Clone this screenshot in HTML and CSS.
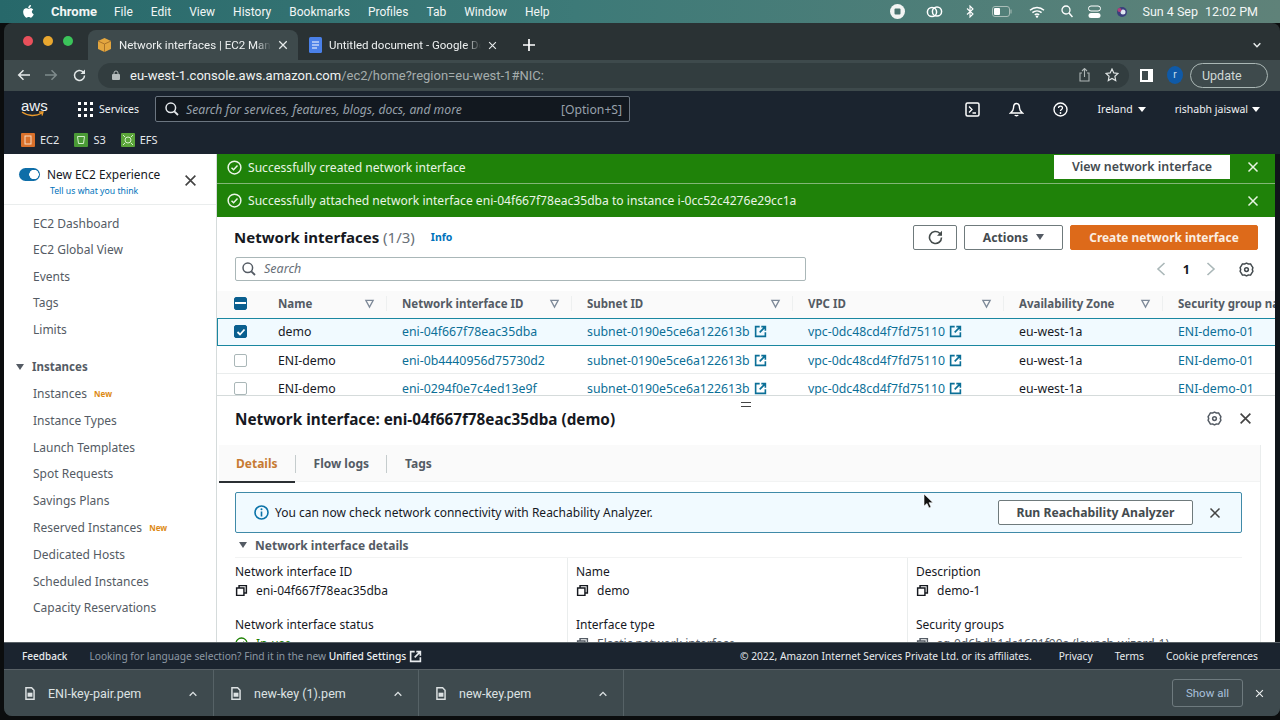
FILE: index.html
```html
<!DOCTYPE html>
<html lang="en">
<head>
    <meta charset="UTF-8">
    <meta name="viewport" content="width=device-width, initial-scale=1.0">
    <title>Network interfaces | EC2 Management Console</title>
    <link rel="stylesheet" href="styles.css">
</head>
<body>
    <svg class="defs" width="0" height="0">
        <symbol id="i-x" viewBox="0 0 16 16"><path d="M2 2l12 12M14 2L2 14" fill="none" stroke="currentColor" stroke-width="2"/></symbol>
        <symbol id="i-ext" viewBox="0 0 16 16"><path d="M7 2H2v12h12V9M9 2h5v5M14 2L7 9" fill="none" stroke="currentColor" stroke-width="2"/></symbol>
        <symbol id="i-copy" viewBox="0 0 16 16"><path d="M5 5V2h9v9h-3M2 5h9v9H2z" fill="none" stroke="currentColor" stroke-width="1.8"/></symbol>
        <symbol id="i-gear" viewBox="0 0 16 16"><circle cx="8" cy="8" r="2" fill="none" stroke="currentColor" stroke-width="1.6"/><path d="M8 1.2l2 .9 2.3-.1 1.3 2.2 1.2 1.9-.6 1.9.6 1.9-1.2 1.9-1.3 2.2-2.3-.1-2 .9-2-.9-2.3.1-1.3-2.2L1.2 9.9 1.8 8l-.6-1.9 1.2-1.9 1.3-2.2 2.3.1z" fill="none" stroke="currentColor" stroke-width="1.6" stroke-linejoin="round"/></symbol>
        <symbol id="i-sort" viewBox="0 0 12 12"><path d="M2 2.5h8L6 10z" fill="none" stroke="currentColor" stroke-width="1.4"/></symbol>
        <symbol id="i-ok" viewBox="0 0 16 16"><circle cx="8" cy="8" r="6.8" fill="none" stroke="currentColor" stroke-width="1.6"/><path d="M4.8 8.2l2.2 2.2 4.2-4.6" fill="none" stroke="currentColor" stroke-width="1.6"/></symbol>
        <symbol id="i-file" viewBox="0 0 12 16"><path d="M1 1h7l3 3v11H1z" fill="none" stroke="currentColor" stroke-width="1.8"/><rect x="3" y="7" width="6" height="5" fill="currentColor"/></symbol>
        <symbol id="i-up" viewBox="0 0 12 12"><path d="M2 8l4-4 4 4" fill="none" stroke="currentColor" stroke-width="1.6"/></symbol>
    </svg>

    <div class="menubar">
        <div class="menubar-left">
            <svg class="apple" viewBox="0 0 14 16" width="13" height="15"><path d="M10.6 8.4c0-1.7 1.4-2.5 1.5-2.6-.8-1.2-2.1-1.4-2.5-1.4-1.1-.1-2.1.6-2.6.6s-1.4-.6-2.3-.6C3.5 4.4 2.4 5 1.8 6c-1.2 2.1-.3 5.2.9 6.9.6.8 1.3 1.8 2.2 1.7.9 0 1.2-.6 2.3-.6s1.4.6 2.3.6c1 0 1.6-.8 2.1-1.7.7-1 1-1.9 1-2-.1 0-2-.8-2-2.5zM8.9 3.3c.5-.6.8-1.4.7-2.3-.7 0-1.6.5-2.1 1.1-.5.5-.9 1.4-.8 2.2.8.1 1.7-.4 2.2-1z" fill="#fff"/></svg>
            <b>Chrome</b><span>File</span><span>Edit</span><span>View</span><span>History</span><span>Bookmarks</span><span>Profiles</span><span>Tab</span><span>Window</span><span>Help</span>
        </div>
        <div class="menubar-right">
            <svg width="15" height="15" viewBox="0 0 15 15"><circle cx="7.5" cy="7.5" r="7.5" fill="#f2f4f3"/><rect x="4.5" y="4.5" width="6" height="6" rx="1" fill="#4a7470"/></svg>
            <svg class="m-cc" width="17" height="13" viewBox="0 0 17 13"><circle cx="6" cy="7" r="4.6" fill="none" stroke="#fff" stroke-width="1.5"/><circle cx="11" cy="6.5" r="4.6" fill="none" stroke="#fff" stroke-width="1.5"/></svg>
            <svg class="m-bt" width="8" height="13" viewBox="0 0 8 13"><path d="M1 3.5l6 5.5-3 3V1l3 3-6 5.5" fill="none" stroke="#fff" stroke-width="1.1"/></svg>
            <svg class="m-bat" width="20" height="11" viewBox="0 0 20 11"><rect x=".5" y=".5" width="17" height="10" rx="2.5" fill="none" stroke="#a9bdb8"/><rect x="2" y="2" width="6" height="7" rx="1" fill="#fff"/><rect x="18.5" y="3.5" width="1" height="4" fill="#a9bdb8"/></svg>
            <svg class="m-wifi" width="16" height="12" viewBox="0 0 16 12"><path d="M1 4.2C5 .6 11 .6 15 4.2M3.4 6.6c2.7-2.3 6.5-2.3 9.2 0M5.8 8.8c1.3-1 3.1-1 4.4 0" fill="none" stroke="#fff" stroke-width="1.5"/><circle cx="8" cy="10.6" r="1.2" fill="#fff"/></svg>
            <svg class="m-q" width="12" height="13" viewBox="0 0 12 13"><circle cx="5" cy="5" r="4" fill="none" stroke="#fff" stroke-width="1.3"/><path d="M8 8l3.5 4" stroke="#fff" stroke-width="1.5"/></svg>
            <svg class="m-cc2" width="13" height="14" viewBox="0 0 13 14"><rect x=".5" y="1" width="12" height="5" rx="2.5" fill="none" stroke="#fff"/><rect x=".5" y="8" width="12" height="5" rx="2.5" fill="#fff"/></svg>
            <svg class="m-siri" width="12" height="12" viewBox="0 0 12 12"><circle cx="6" cy="6" r="5" fill="#3a3f7c"/><circle cx="7" cy="6" r="2.5" fill="#dfe6f2"/><circle cx="3.5" cy="4" r="2" fill="#b0407a"/></svg>
            <span class="m-date">Sun 4 Sep</span><span class="m-time">12:02 PM</span>
        </div>
    </div>

    <div class="window">
        <div class="tabstrip">
            <div class="lights"><i class="red"></i><i class="yellow"></i><i class="green"></i></div>
            <div class="tab tab-active">
                <svg width="15" height="16" viewBox="0 0 15 16"><path d="M7.5 1L14 4v8l-6.5 3L1 12V4z" fill="#e3a63f"/><path d="M1 4l6.5 3L14 4M7.5 7v8" fill="none" stroke="#a8732a"/></svg>
                <span class="tab-title">Network interfaces | EC2 Mana</span>
                <svg class="tab-x" width="10" height="10"><use href="#i-x"/></svg>
            </div>
            <div class="tab">
                <svg width="13" height="16" viewBox="0 0 13 16"><rect width="13" height="16" rx="1.5" fill="#4a80e8"/><path d="M3 5h7M3 8h7M3 11h5" stroke="#fff" stroke-width="1.2"/></svg>
                <span class="tab-title">Untitled document - Google Do</span>
                <svg class="tab-x" width="9" height="9"><use href="#i-x"/></svg>
            </div>
            <svg class="tab-new" width="12" height="12" viewBox="0 0 12 12"><path d="M6 0v12M0 6h12" stroke="#fff" stroke-width="1.7"/></svg>
            <svg class="tab-more" width="10" height="10" viewBox="0 0 12 12"><path d="M2 4l4 4 4-4" fill="none" stroke="#e8ecec" stroke-width="1.8"/></svg>
        </div>

        <div class="toolbar">
            <svg class="tb-btn" width="14" height="12" viewBox="0 0 14 12"><path d="M13 6H2M6.5 1.2L1.7 6l4.8 4.8" fill="none" stroke="#e3e8e8" stroke-width="1.5"/></svg>
            <svg class="tb-btn dim" width="14" height="12" viewBox="0 0 14 12"><path d="M1 6h11M7.5 1.2L12.3 6l-4.8 4.8" fill="none" stroke="#7e8a8b" stroke-width="1.5"/></svg>
            <svg class="tb-btn" width="13" height="13" viewBox="0 0 13 13"><path d="M11.5 6.5a5 5 0 1 1-1.5-3.600L11.5 4.5" fill="none" stroke="#e3e8e8" stroke-width="1.5"/><path d="M12 .5v4.5H7.5z" fill="#e3e8e8"/></svg>
            <div class="omnibox">
                <svg width="8" height="10" viewBox="0 0 8 10"><rect y="4" width="8" height="6" rx="1" fill="#b5bcbc"/><path d="M2 4.5V3a2 2 0 0 1 4 0v1.500" fill="none" stroke="#b5bcbc"/></svg>
                <span class="url"><b>eu-west-1.console.aws.amazon.com</b>/ec2/home?region=eu-west-1#NIC:</span>
                <svg class="omni-share" width="11" height="14" viewBox="0 0 11 14"><path d="M3 5H1v8h9V5H8M5.5 9V1M3 3l2.5-2.5L8 3" fill="none" stroke="#aeb6b6" stroke-width="1.1"/></svg>
                <svg class="omni-star" width="14" height="14" viewBox="0 0 14 14"><path d="M7 1l1.800 3.900 4.200.5-3.100 2.900.8 4.200L7 10.400l-3.700 2.100.8-4.200L1 5.400l4.200-.5z" fill="none" stroke="#dfe4e4" stroke-width="1.2"/></svg>
            </div>
            <svg class="tb-side" width="13" height="13" viewBox="0 0 13 13"><rect x="1" y="1" width="11" height="11" fill="none" stroke="#fff" stroke-width="2"/><rect x="8" y="1" width="4" height="11" fill="#fff"/></svg>
            <div class="avatar">r</div>
            <div class="update">Update</div>
        </div>

        <div class="awsnav">
            <div class="aws-logo">aws
                <svg width="23" height="7" viewBox="0 0 23 7"><path d="M1 1c6 4.500 14 4.500 20 1M18 1h4l-1 3.500" fill="none" stroke="#ec9a2c" stroke-width="1.3"/></svg>
            </div>
            <div class="services">
                <div class="dots"><i></i><i></i><i></i><i></i><i></i><i></i><i></i><i></i><i></i></div>
                <span>Services</span>
            </div>
            <div class="awssearch">
                <svg width="14" height="14" viewBox="0 0 14 14"><circle cx="5.8" cy="5.8" r="4.8" fill="none" stroke="#e6e9ec" stroke-width="1.5"/><path d="M9.3 9.3L13 13" stroke="#e6e9ec" stroke-width="1.8"/></svg>
                <em>Search for services, features, blogs, docs, and more</em>
                <span>[Option+S]</span>
            </div>
            <div class="nav-right">
                <svg class="nav-icon" width="15" height="15" viewBox="0 0 15 15"><rect x="1" y="1" width="13" height="13" rx="1.5" fill="none" stroke="#fff" stroke-width="1.5"/><path d="M4 4.5L7 7.5 4 10.5M7.500 11H11" fill="none" stroke="#fff" stroke-width="1.3"/></svg>
                <svg class="nav-icon" width="15" height="15" viewBox="0 0 15 15"><path d="M7.5 1.5C5 1.5 4.5 3.5 4.5 6c0 2-1 3.5-3 5h12c-2-1.5-3-3-3-5 0-2.5-.5-4.5-3-4.500zM5.800 13c.6 1 2.800 1 3.400 0" fill="none" stroke="#fff" stroke-width="1.4"/></svg>
                <svg class="nav-icon" width="15" height="15" viewBox="0 0 15 15"><circle cx="7.5" cy="7.5" r="6.5" fill="none" stroke="#fff" stroke-width="1.4"/><path d="M5.5 6c0-2.5 4-2.5 4 0 0 1.5-2 1.5-2 3" fill="none" stroke="#fff" stroke-width="1.3"/><circle cx="7.5" cy="11" r=".9" fill="#fff"/></svg>
                <span class="nav-link nav-ireland">Ireland <i class="caret-w"></i></span>
                <span class="nav-link nav-user">rishabh jaiswal <i class="caret-w"></i></span>
            </div>
        </div>

        <div class="favbar">
            <span class="fav"><svg width="14" height="14" viewBox="0 0 14 14"><rect width="14" height="14" rx="1" fill="#d9702a"/><rect x="4" y="3" width="6" height="8" fill="none" stroke="#f7dcc4"/></svg>EC2</span>
            <span class="fav"><svg width="14" height="14" viewBox="0 0 14 14"><rect width="14" height="14" rx="1" fill="#4a9a36"/><path d="M3.5 3.5h7l-1 7h-5z" fill="none" stroke="#d5efcb"/></svg>S3</span>
            <span class="fav"><svg width="14" height="14" viewBox="0 0 14 14"><rect width="14" height="14" rx="1" fill="#5ba53a"/><circle cx="7" cy="7" r="3" fill="none" stroke="#d5efcb"/><path d="M2 2l2 2M12 2l-2 2M2 12l2-2M12 12l-2-2" stroke="#d5efcb"/></svg>EFS</span>
        </div>

        <div class="main">
            <aside class="sidebar">
                <div class="side-head">
                    <div class="side-head-top"><i class="toggle"></i><span>New EC2 Experience</span></div>
                    <a class="side-feedback">Tell us what you think</a>
                    <svg class="side-x" width="13" height="13"><use href="#i-x"/></svg>
                </div>
                <ul class="side-list">
                    <li>EC2 Dashboard</li>
                    <li>EC2 Global View</li>
                    <li>Events</li>
                    <li>Tags</li>
                    <li>Limits</li>
                </ul>
                <div class="side-group"><i class="caret"></i>Instances</div>
                <ul class="side-list side-list-2">
                    <li>Instances <span class="new">New</span></li>
                    <li>Instance Types</li>
                    <li>Launch Templates</li>
                    <li>Spot Requests</li>
                    <li>Savings Plans</li>
                    <li>Reserved Instances <span class="new">New</span></li>
                    <li>Dedicated Hosts</li>
                    <li>Scheduled Instances</li>
                    <li>Capacity Reservations</li>
                </ul>
                <div class="side-group side-group-2"><i class="caret"></i>Images</div>
            </aside>

            <section class="content">
                <div class="flash flash-1">
                    <svg width="15" height="15"><use href="#i-ok"/></svg>
                    <span>Successfully created network interface</span>
                    <div class="flash-btn">View network interface</div>
                    <svg class="flash-x" width="12" height="12"><use href="#i-x"/></svg>
                </div>
                <div class="flash flash-2">
                    <svg width="15" height="15"><use href="#i-ok"/></svg>
                    <span>Successfully attached network interface eni-04f667f78eac35dba to instance i-0cc52c4276e29cc1a</span>
                    <svg class="flash-x" width="12" height="12"><use href="#i-x"/></svg>
                </div>

                <div class="tbl-head">
                    <h1>Network interfaces <span>(1/3)</span></h1>
                    <a class="info">Info</a>
                    <div class="btn btn-icon"><svg width="15" height="15" viewBox="0 0 15 15"><path d="M13.5 7.5a6 6 0 1 1-1.800-4.300l1.800 1.800" fill="none" stroke="#444b4b" stroke-width="1.6"/><path d="M14 .8v5H9z" fill="#444b4b"/></svg></div>
                    <div class="btn btn-actions">Actions <i class="caret"></i></div>
                    <div class="btn btn-primary">Create network interface</div>
                </div>
                <div class="tbl-tools">
                    <div class="search-box">
                        <svg width="14" height="14" viewBox="0 0 14 14"><circle cx="5.8" cy="5.8" r="4.8" fill="none" stroke="#545b64" stroke-width="1.5"/><path d="M9.3 9.3L13 13" stroke="#545b64" stroke-width="1.8"/></svg>
                        <em>Search</em>
                    </div>
                    <div class="pager">
                        <svg width="10" height="14" viewBox="0 0 10 14"><path d="M8.5 1L2 7l6.5 6" fill="none" stroke="#aab7b8" stroke-width="1.6"/></svg>
                        <b>1</b>
                        <svg width="10" height="14" viewBox="0 0 10 14"><path d="M1.5 1L8 7l-6.5 6" fill="none" stroke="#aab7b8" stroke-width="1.6"/></svg>
                        <svg class="pager-gear" width="15" height="15"><use href="#i-gear"/></svg>
                    </div>
                </div>

                <div class="table">
                    <div class="row row-head">
                        <div class="cell-check"><i class="check check-mixed"></i></div>
                        <div class="th"><div>Name<svg width="11" height="11"><use href="#i-sort"/></svg></div></div>
                        <div class="th"><div>Network interface ID<svg width="11" height="11"><use href="#i-sort"/></svg></div></div>
                        <div class="th"><div>Subnet ID<svg width="11" height="11"><use href="#i-sort"/></svg></div></div>
                        <div class="th"><div>VPC ID<svg width="11" height="11"><use href="#i-sort"/></svg></div></div>
                        <div class="th"><div>Availability Zone<svg width="11" height="11"><use href="#i-sort"/></svg></div></div>
                        <div class="th th-last">Security group name</div>
                    </div>
                    <div class="row row-selected">
                        <div class="cell-check"><i class="check check-on"><svg width="10" height="10" viewBox="0 0 10 10"><path d="M1.5 5l2.5 2.5 4.5-5" fill="none" stroke="#fff" stroke-width="1.8"/></svg></i></div>
                        <div>demo</div>
                        <div class="link">eni-04f667f78eac35dba</div>
                        <div class="link">subnet-0190e5ce6a122613b <svg width="13" height="13"><use href="#i-ext"/></svg></div>
                        <div class="link">vpc-0dc48cd4f7fd75110 <svg width="13" height="13"><use href="#i-ext"/></svg></div>
                        <div>eu-west-1a</div>
                        <div class="link">ENI-demo-01</div>
                    </div>
                    <div class="row row-plain">
                        <div class="cell-check"><i class="check"></i></div>
                        <div>ENI-demo</div>
                        <div class="link">eni-0b4440956d75730d2</div>
                        <div class="link">subnet-0190e5ce6a122613b <svg width="13" height="13"><use href="#i-ext"/></svg></div>
                        <div class="link">vpc-0dc48cd4f7fd75110 <svg width="13" height="13"><use href="#i-ext"/></svg></div>
                        <div>eu-west-1a</div>
                        <div class="link">ENI-demo-01</div>
                    </div>
                    <div class="row row-cut">
                        <div class="cell-check"><i class="check"></i></div>
                        <div>ENI-demo</div>
                        <div class="link">eni-0294f0e7c4ed13e9f</div>
                        <div class="link">subnet-0190e5ce6a122613b <svg width="13" height="13"><use href="#i-ext"/></svg></div>
                        <div class="link">vpc-0dc48cd4f7fd75110 <svg width="13" height="13"><use href="#i-ext"/></svg></div>
                        <div>eu-west-1a</div>
                        <div class="link">ENI-demo-01</div>
                    </div>
                </div>

                <div class="panel">
                    <div class="handle"></div>
                    <div class="panel-head">
                        <h2>Network interface: eni-04f667f78eac35dba (demo)</h2>
                        <svg class="panel-gear" width="15" height="15"><use href="#i-gear"/></svg>
                        <svg class="panel-x" width="13" height="13"><use href="#i-x"/></svg>
                    </div>
                    <div class="panel-body">
                        <div class="tabs">
                            <span class="ptab ptab-on">Details</span>
                            <span class="ptab">Flow logs</span>
                            <span class="ptab">Tags</span>
                        </div>
                        <div class="alert">
                            <svg width="15" height="15" viewBox="0 0 15 15"><circle cx="7.5" cy="7.5" r="6.5" fill="none" stroke="#0b73a8" stroke-width="1.6"/><path d="M7.5 6.5v5" stroke="#0b73a8" stroke-width="1.6"/><circle cx="7.5" cy="4.3" r="1" fill="#0b73a8"/></svg>
                            <span>You can now check network connectivity with Reachability Analyzer.</span>
                            <div class="btn btn-run">Run Reachability Analyzer</div>
                            <svg class="alert-x" width="12" height="12"><use href="#i-x"/></svg>
                        </div>
                        <div class="details-title"><i class="caret"></i>Network interface details</div>
                        <div class="details">
                            <div class="dcol">
                                <label>Network interface ID</label>
                                <p><svg width="13" height="13"><use href="#i-copy"/></svg>eni-04f667f78eac35dba</p>
                                <label>Network interface status</label>
                                <p class="status"><svg width="13" height="13"><use href="#i-ok"/></svg>In-use</p>
                            </div>
                            <div class="dcol">
                                <label>Name</label>
                                <p><svg width="13" height="13"><use href="#i-copy"/></svg>demo</p>
                                <label>Interface type</label>
                                <p class="faded"><svg width="13" height="13"><use href="#i-copy"/></svg>Elastic network interface</p>
                            </div>
                            <div class="dcol">
                                <label>Description</label>
                                <p><svg width="13" height="13"><use href="#i-copy"/></svg>demo-1</p>
                                <label>Security groups</label>
                                <p class="faded"><svg width="13" height="13"><use href="#i-copy"/></svg>sg-0d6bdb1dc1681f90a (launch-wizard-1)</p>
                            </div>
                        </div>
                    </div>
                    <svg class="cursor" width="11" height="16" viewBox="0 0 11 16"><path d="M1 1v12l3-2.5 2 4.500 2-1-2-4.300h4z" fill="#111" stroke="#fff" stroke-width=".6"/></svg>
                </div>
            </section>
        </div>

        <footer class="footer">
            <span class="foot-fb">Feedback</span>
            <span class="foot-lang">Looking for language selection? Find it in the new <b>Unified Settings</b></span>
            <svg class="foot-ext" width="13" height="13"><use href="#i-ext"/></svg>
            <span class="foot-copy">© 2022, Amazon Internet Services Private Ltd. or its affiliates.</span>
            <span class="foot-link">Privacy</span>
            <span class="foot-link">Terms</span>
            <span class="foot-link">Cookie preferences</span>
        </footer>

        <div class="downloads">
            <div class="dl"><svg width="10" height="13"><use href="#i-file"/></svg><span>ENI-key-pair.pem</span><svg class="dl-up" width="10" height="10"><use href="#i-up"/></svg></div>
            <div class="dl"><svg width="10" height="13"><use href="#i-file"/></svg><span>new-key (1).pem</span><svg class="dl-up" width="10" height="10"><use href="#i-up"/></svg></div>
            <div class="dl"><svg width="10" height="13"><use href="#i-file"/></svg><span>new-key.pem</span><svg class="dl-up" width="10" height="10"><use href="#i-up"/></svg></div>
            <div class="showall">Show all</div>
            <svg class="dl-x" width="9" height="9"><use href="#i-x"/></svg>
        </div>
    </div>
</body>
</html>
```

FILE: styles.css
```css
* {
    box-sizing: border-box;
}

html, body {
    margin: 0;
    height: 720px;
    overflow: hidden;
}

body {
    font-family: 'Noto Sans', sans-serif;
    font-size: 12px;
    color: #16191f;
    background-color: #0b0d0e;
    display: flex;
    flex-direction: column;
}

.defs {
    position: absolute;
}

i {
    display: block;
}

svg {
    display: block;
    flex: none;
}

ul {
    list-style: none;
    margin: 0;
    padding: 0;
}

/* mac menu bar */
.menubar {
    height: 23px;
    flex: none;
    display: flex;
    align-items: center;
    justify-content: space-between;
    padding: 0 22px 0 22px;
    background: linear-gradient(90deg, #27686a, #3d7a78 45%, #5f8279);
    color: #f2f6f5;
    font-family: Roboto, sans-serif;
    font-size: 12px;
}

.menubar-left {
    display: flex;
    align-items: center;
}

.menubar-left b {
    margin-left: 16px;
    margin-right: 17px;
    font-size: 13px;
}

.menubar-left span {
    margin-right: 18px;
}

.menubar-right {
    display: flex;
    align-items: center;
}

.m-cc { margin-left: 21px; }
.m-bt { margin-left: 23px; }
.m-bat { margin-left: 18px; }
.m-wifi { margin-left: 17px; }
.m-q { margin-left: 16px; }
.m-cc2 { margin-left: 15px; }
.m-siri { margin-left: 15px; }
.m-date { margin-left: 14px; font-size: 12.5px; }
.m-time { margin-left: 7px; font-size: 12.5px; }

/* browser window */
.window {
    flex: 1;
    margin: 0 0 4px 4px;
    display: flex;
    flex-direction: column;
    min-height: 0;
    background-color: #2a3234;
    border-radius: 8px;
    overflow: hidden;
}

.tabstrip {
    height: 37px;
    flex: none;
    display: flex;
    align-items: flex-end;
    color: #eef1f1;
    font-family: Roboto, sans-serif;
    font-size: 11.5px;
}

.lights {
    display: flex;
    gap: 10px;
    width: 84px;
    padding: 0 0 14px 19px;
}

.lights i {
    width: 10px;
    height: 10px;
    border-radius: 50%;
}

.red { background-color: #e8505b; }
.yellow { background-color: #e9a72f; }
.green { background-color: #3bc45a; }

.tab {
    width: 205px;
    height: 30px;
    padding: 0 8px 0 9px;
    display: flex;
    align-items: center;
    gap: 7px;
    white-space: nowrap;
}

.tab-active {
    width: 210px;
    margin-right: 2px;
    padding-right: 10px;
    background-color: #3e4a4c;
    border-radius: 8px 8px 0 0;
}

.tab-title {
    flex: 1;
    overflow: hidden;
    -webkit-mask-image: linear-gradient(90deg, #000 90%, transparent);
    mask-image: linear-gradient(90deg, #000 90%, transparent);
}

.tab-x {
    color: #e8ecec;
}

.tab-new {
    margin: 0 0 9px 18px;
}

.tab-more {
    margin: 0 0 10px auto;
    position: relative;
    right: 18px;
}

.toolbar {
    height: 31px;
    flex: none;
    display: flex;
    align-items: center;
    padding: 0 11px 1px 13px;
    background-color: #3e4a4c;
}

.tb-btn {
    margin-right: 13px;
}

.tb-btn.dim {
    margin-right: 15px;
}

.omnibox {
    width: 1031px;
    height: 25px;
    margin-left: -1px;
    padding: 0 10px 0 14px;
    display: flex;
    align-items: center;
    border-radius: 13px;
    background-color: #323d3f;
    font-family: Roboto, sans-serif;
    font-size: 13px;
    color: #a5adad;
}

.url {
    margin-left: 10px;
    flex: 1;
}

.url b {
    font-weight: 400;
    color: #f0f3f3;
}

.omni-star {
    margin-left: 15px;
}

.tb-side {
    margin-left: 11px;
}

.avatar {
    width: 16px;
    height: 18px;
    margin-left: 14px;
    border-radius: 50%;
    background-color: #0f5aa8;
    color: #cfe0f0;
    font-family: Roboto, sans-serif;
    font-size: 10px;
    line-height: 18px;
    text-align: center;
}

.update {
    width: 78px;
    height: 25px;
    margin-left: 7px;
    border: 1px solid #aab7b5;
    border-radius: 13px;
    color: #cfd8d6;
    font-family: Roboto, sans-serif;
    font-size: 12.5px;
    line-height: 23px;
    padding-left: 11px;
}

/* aws console header */
.awsnav {
    height: 36px;
    flex: none;
    display: flex;
    align-items: center;
    padding: 0 20px 0 17px;
    background-color: #1b242f;
    color: #f0f2f4;
    font-size: 12px;
}

.aws-logo {
    width: 27px;
    font-family: 'Liberation Sans', sans-serif;
    font-size: 15px;
    line-height: 11px;
}

.services {
    display: flex;
    align-items: center;
    gap: 6px;
    margin-left: 30px;
    font-size: 10.5px;
}

.dots {
    width: 15px;
    display: grid;
    grid-template-columns: repeat(3, 3px);
    gap: 3px;
}

.dots i {
    height: 3px;
    background-color: #fff;
}

.awssearch {
    width: 475px;
    height: 26px;
    margin-left: 16px;
    padding: 0 7px 0 9px;
    display: flex;
    align-items: center;
    border: 1px solid #6b7580;
    border-radius: 2px;
    background-color: #12181f;
    color: #98a1ab;
    font-size: 12.2px;
}

.awssearch em {
    flex: 1;
    margin-left: 7px;
}

.nav-right {
    margin-left: auto;
    display: flex;
    align-items: center;
    font-size: 10.5px;
}

.nav-icon {
    margin-right: 29px;
}

.nav-link {
    display: flex;
    align-items: center;
    gap: 5px;
}

.nav-ireland {
    margin-left: 1px;
    margin-right: 29px;
}

.nav-user {
    gap: 4px;
}

.caret-w {
    border: 4px solid transparent;
    border-top: 5px solid #fff;
    border-bottom: 0;
}

.favbar {
    height: 27px;
    flex: none;
    display: flex;
    align-items: center;
    gap: 15px;
    padding: 0 0 2px 17px;
    background-color: #1b242f;
    color: #e6e9ec;
    font-size: 11px;
}

.fav {
    display: flex;
    align-items: center;
    gap: 5px;
}

/* page body */
.main {
    flex: none;
    height: 488px;
    display: flex;
    padding-right: 5px;
    background-color: #10151a;
}

.sidebar {
    width: 213px;
    flex: none;
    overflow: hidden;
    background-color: #fff;
    color: #545b64;
    border-right: 1px solid #d5dbdb;
}

.side-head {
    position: relative;
    height: 51px;
    padding: 13px 0 0 15px;
    border-bottom: 1px solid #eaeded;
}

.side-head-top {
    display: flex;
    align-items: center;
    gap: 7px;
    color: #16191f;
    font-size: 11.9px;
    line-height: 14px;
}

.toggle {
    width: 21px;
    height: 13px;
    border-radius: 7px;
    background: radial-gradient(circle at 15px 6.5px, #fff 4.5px, #0f6ea8 5px);
}

.side-feedback {
    display: block;
    margin: 4px 0 0 31px;
    font-size: 8.7px;
    color: #0073bb;
}

.side-x {
    position: absolute;
    top: 20px;
    left: 180px;
    color: #444;
}

.side-list {
    padding: 6px 0 0 29px;
}

.side-list li {
    height: 26.4px;
    line-height: 26.4px;
}

.side-list-2 {
    padding-top: 2px;
}

.side-list-2 li {
    height: 26.8px;
    line-height: 26.8px;
}

.side-group {
    display: flex;
    align-items: center;
    gap: 8px;
    height: 24px;
    margin-top: 12px;
    padding-left: 12px;
    font-weight: 700;
    font-size: 11.5px;
}

.caret {
    border: 4.5px solid transparent;
    border-top: 6px solid #545b64;
    border-bottom: 0;
}

.new {
    margin-left: 4px;
    font-size: 8px;
    font-weight: 700;
    color: #dd8a14;
    vertical-align: 1px;
}

.content {
    flex: 1;
    min-width: 0;
    display: flex;
    flex-direction: column;
    background-color: #fff;
}

.flash {
    flex: none;
    display: flex;
    align-items: center;
    gap: 6px;
    padding: 0 16px 0 10px;
    background-color: #1f8209;
    color: #eaf5e6;
    font-size: 12.1px;
}

.flash-1 {
    height: 29px;
    padding-bottom: 3px;
}

.flash-2 {
    height: 34px;
    border-top: 1px solid #82b676;
}

.flash-btn {
    width: 176px;
    height: 24px;
    margin-left: auto;
    margin-right: 11px;
    background-color: #fff;
    color: #444b4f;
    font-weight: 600;
    font-size: 12.4px;
    line-height: 23px;
    text-align: center;
}

.flash-x {
    color: #e7f4e2;
}

.flash-2 .flash-x {
    margin-left: auto;
}

.tbl-head {
    height: 40px;
    flex: none;
    display: flex;
    align-items: center;
    padding: 0 17px;
}

h1 {
    margin: 0;
    font-size: 15px;
    font-weight: 700;
}

h1 span {
    font-weight: 400;
    color: #687078;
}

.info {
    margin-left: 16px;
    font-size: 10.5px;
    font-weight: 700;
    color: #0073bb;
}

.btn {
    height: 25px;
    border: 1px solid #6f7a7c;
    border-radius: 2px;
    background-color: #fff;
    color: #444b4f;
    font-weight: 700;
    display: flex;
    align-items: center;
    justify-content: center;
}

.btn-icon {
    width: 44px;
    margin-left: auto;
}

.btn-actions {
    width: 99px;
    margin-left: 7px;
    gap: 8px;
    font-size: 12.2px;
}

.btn-primary {
    width: 188px;
    margin-left: 7px;
    background-color: #dd6a1a;
    border-color: #dd6a1a;
    color: #fbeee2;
    font-size: 11.9px;
}

.tbl-tools {
    height: 34px;
    flex: none;
    display: flex;
    align-items: flex-start;
    padding: 0 21px 0 18px;
}

.search-box {
    width: 571px;
    height: 24px;
    padding: 0 6px 1px;
    display: flex;
    align-items: center;
    gap: 8px;
    border: 1px solid #aab7b8;
    border-radius: 2px;
    color: #687078;
    font-size: 12.5px;
}

.pager {
    height: 24px;
    margin-left: auto;
    display: flex;
    align-items: center;
}

.pager b {
    font-size: 12.5px;
    margin: 0 16px 0 17px;
}

.pager-gear {
    margin-left: 23px;
    color: #444b4f;
}

.table {
    flex: none;
    height: 104px;
    overflow: hidden;
}

.row {
    height: 28px;
    display: grid;
    grid-template-columns: 61px 124px 185px 221px 211px 159px 100px;
    align-items: center;
    white-space: nowrap;
    border-bottom: 1px solid #eaeded;
    font-size: 12.3px;
}

.row-head {
    height: 27px;
    padding-bottom: 2px;
    background-color: #fafafa;
    color: #545b64;
    font-size: 11.5px;
    font-weight: 700;
    border-bottom: 0;
}

.row-selected {
    grid-template-columns: 60px 124px 185px 221px 211px 159px 100px;
    padding-bottom: 1px;
    background-color: #f1faff;
    border: 1px solid #1a87a0;
    border-right: 0;
}

.row-selected .cell-check {
    padding-left: 16px;
}

.row-plain {
    padding-top: 1px;
}

.row-cut {
    border-bottom: 0;
}

.cell-check {
    padding-left: 17px;
}

.check {
    width: 13px;
    height: 13px;
    border: 1px solid #aab7b8;
    border-radius: 2px;
    background-color: #fff;
}

.check-on {
    border-color: #0a5f8f;
    background-color: #0a5f8f;
    padding: 1px 0 0 1px;
}

.check-mixed {
    border-color: #0a5f8f;
    background: linear-gradient(#0a5f8f 4px, #fff 4px, #fff 6px, #0a5f8f 6px);
}

.th {
    padding-right: 15px;
}

.th div {
    display: flex;
    align-items: center;
    justify-content: space-between;
    padding-right: 11px;
    border-right: 1px solid #eef0f0;
}

.th svg {
    color: #7d8998;
}

.th-last {
    padding: 0;
}

.link {
    display: flex;
    align-items: center;
    gap: 4px;
    color: #0b6f97;
}

.panel {
    flex: 1;
    min-height: 0;
    position: relative;
    overflow: hidden;
    background-color: #fff;
    border-top: 1px solid #d5dbdb;
    padding: 0 14px 0 2px;
}

.handle {
    position: absolute;
    top: 6px;
    left: 524px;
    width: 10px;
    height: 5px;
    border-top: 1px solid #444;
    border-bottom: 1px solid #444;
}

.panel-head {
    height: 49px;
    display: flex;
    align-items: center;
    padding: 0 9px 4px 16px;
}

h2 {
    margin: 0;
    flex: 1;
    font-size: 15.3px;
    font-weight: 700;
}

.panel-gear {
    color: #545b64;
}

.panel-x {
    margin-left: 17px;
    color: #444;
}

.panel-body {
    border-right: 1px solid #eaeded;
    padding: 0 18px 0 16px;
}

.tabs {
    height: 37px;
    margin: 0 -18px 0 -16px;
    padding-top: 1px;
    display: flex;
    align-items: center;
    background-color: #fafafa;
    border-bottom: 1px solid #f2f3f3;
    color: #545b64;
    font-weight: 700;
}

.ptab {
    height: 18px;
    line-height: 18px;
    padding: 0 17px 0 18px;
    border-right: 1px solid #c5cccd;
    position: relative;
}

.ptab:first-child {
    padding: 0 17px;
}

.ptab:last-child {
    border-right: 0;
}

.ptab-on {
    color: #c77a33;
}

.ptab-on::after {
    content: '';
    position: absolute;
    left: 0;
    right: 0;
    bottom: -10px;
    height: 2px;
    background-color: #2b2f33;
}

.alert {
    height: 41px;
    margin-top: 10px;
    padding: 0 20px 0 18px;
    display: flex;
    align-items: center;
    gap: 6px;
    border: 1px solid #3f8aa8;
    border-radius: 2px;
    background-color: #f1faff;
}

.btn-run {
    width: 195px;
    margin-left: auto;
    font-size: 12.2px;
}

.alert-x {
    margin-left: 10px;
    color: #444;
}

.details-title {
    height: 25px;
    display: flex;
    align-items: center;
    gap: 8px;
    padding-left: 4px;
    color: #545b64;
    font-weight: 700;
    border-bottom: 1px solid #f2f3f3;
}

.details {
    display: grid;
    grid-template-columns: 333px 340px 1fr;
}

.dcol {
    padding: 4px 0 0 8px;
    border-right: 1px solid #eaeded;
    height: 90px;
}

.dcol:first-child {
    padding-left: 0;
}

.dcol:last-child {
    border-right: 0;
}

label {
    display: block;
    height: 19px;
    line-height: 19px;
}

.dcol p {
    margin: 0 0 15px;
    height: 19px;
    display: flex;
    align-items: center;
    gap: 8px;
}

.status {
    color: #1d8102;
}

.faded {
    color: #545b64;
}

.cursor {
    position: absolute;
    left: 706px;
    top: 97px;
}

/* console footer */
.footer {
    height: 27px;
    flex: none;
    display: flex;
    align-items: center;
    padding: 0 22px 0 18px;
    background-color: #1b242f;
    color: #e8ebee;
    font-size: 10.2px;
    border-top: 1px solid #596166;
}

.foot-fb {
    font-size: 10px;
    font-weight: 500;
}

.foot-lang {
    margin-left: 22px;
    color: #8d98a3;
}

.foot-lang b {
    font-weight: 500;
    color: #eef0f2;
}

.foot-ext {
    margin-left: 3px;
}

.foot-copy {
    margin-left: auto;
    margin-right: 5px;
}

.foot-link {
    margin-left: 22px;
}

/* chrome downloads shelf */
.downloads {
    flex: 1;
    display: flex;
    align-items: center;
    background-color: #3e4a4e;
    color: #dde2e3;
    font-family: Roboto, sans-serif;
    font-size: 12.5px;
    border-top: 1px solid #596166;
}

.dl {
    width: 205px;
    height: 100%;
    padding: 1px 15px 0 17px;
    display: flex;
    align-items: center;
    gap: 13px;
    border-right: 1px solid #566266;
}

.dl:first-child {
    width: 210px;
    padding-left: 21px;
}

.dl-up {
    margin-left: auto;
}

.showall {
    width: 71px;
    height: 28px;
    margin-left: auto;
    border: 1px solid #6e7a7e;
    border-radius: 3px;
    color: #a9c0dc;
    font-size: 11.5px;
    line-height: 26px;
    text-align: center;
}

.dl-x {
    margin: 0 16px 0 12px;
    color: #eef1f1;
}
```
